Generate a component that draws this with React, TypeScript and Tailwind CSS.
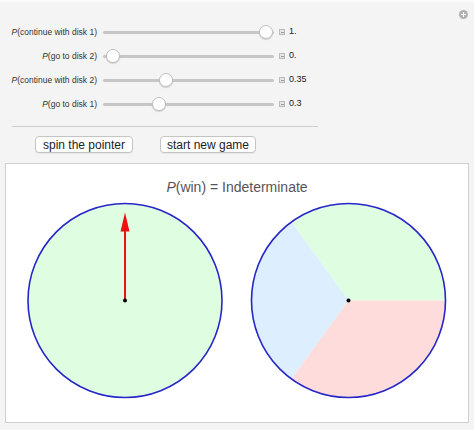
import React from 'react';

const sliders = [
  { label: 'continue with disk 1', value: 1, text: '1.' },
  { label: 'go to disk 2', value: 0, text: '0.' },
  { label: 'continue with disk 2', value: 0.35, text: '0.35' },
  { label: 'go to disk 1', value: 0.3, text: '0.3' },
];

function SliderRow({ label, value, text }: { label: string; value: number; text: string }) {
  return (
    <div className="flex items-center h-6">
      <span className="w-[97px] text-right text-[8.5px] text-[#333] whitespace-nowrap">
        <i>P</i>({label})
      </span>
      <div className="relative ml-[6px] w-[171px] h-[3px] rounded-full bg-[#c6c6c6]">
        <div
          className="absolute top-1/2 -translate-x-1/2 -translate-y-1/2 w-[14px] h-[14px] rounded-full bg-white border border-[#c0c0c0] shadow-[0_1px_1px_rgba(0,0,0,0.15)]"
          style={{ left: 9.5 + value * 153.6 }}
        />
      </div>
      <div className="ml-[5px] w-[6px] h-[6px] border border-[#bbb] bg-[#e6e6e6] flex items-center justify-center">
        <div className="w-[3px] h-px bg-[#999]" />
      </div>
      <span className="ml-[4px] text-[9px] text-[#222]">{text}</span>
    </div>
  );
}

export default function App() {
  const cx1 = 119;
  const cx2 = 342.5;
  const cy = 105.5;
  const r = 97;
  // sectors: continue with disk 2 (0.35), go to disk 1 (0.3), rest lose
  const a1 = 0.35 * 2 * Math.PI;
  const a2 = 0.65 * 2 * Math.PI;
  const p = (a: number) => `${cx2 + r * Math.cos(a)} ${cy - r * Math.sin(a)}`;

  return (
    <div
      className="relative w-[474px] h-[430px] bg-[#f4f4f4] border-t-2 border-[#fbfbfb] flex flex-col"
      style={{ fontFamily: '"Liberation Sans", Arial, sans-serif' }}
    >
      {/* plus icon */}
      <div className="absolute right-[6px] top-[8px] w-[9px] h-[9px] rounded-full bg-[#b0b0b0] flex items-center justify-center">
        <div className="relative w-[5px] h-[5px]">
          <div className="absolute top-[2px] left-0 w-[5px] h-px bg-white" />
          <div className="absolute left-[2px] top-0 h-[5px] w-px bg-white" />
        </div>
      </div>

      <div className="pt-[18px]">
        {sliders.map((s) => (
          <SliderRow key={s.label} {...s} />
        ))}
      </div>

      <div className="mt-[10px] ml-[12px] w-[306px] h-px bg-[#cfcfcf]" />

      <div className="mt-[9px] ml-[35px] flex gap-[27px]">
        <button className="w-[98px] h-[17px] bg-white border border-[#c4c4c4] rounded-[4px] text-[12px] leading-none text-[#222] shadow-[0_1px_0_rgba(0,0,0,0.05)]">
          spin the pointer
        </button>
        <button className="w-[96px] h-[17px] bg-white border border-[#c4c4c4] rounded-[4px] text-[12px] leading-none text-[#222] shadow-[0_1px_0_rgba(0,0,0,0.05)]">
          start new game
        </button>
      </div>

      <div className="mt-[10px] mx-[5px] h-[260px] bg-white border border-[#d0d0d0] flex flex-col">
        <div className="pt-[15px] h-[31px] text-center text-[14px] leading-[16px] text-[#555]">
          <i>P</i>(win) = Indeterminate
        </div>
        <svg width="462" height="227" viewBox="0 0 462 227">
          {/* left disk */}
          <circle cx={cx1} cy={cy} r={r} fill="#dffde0" stroke="#2626c8" strokeWidth="1.6" />
          <line x1={cx1} y1={cy} x2={cx1} y2={cy - 70} stroke="#f01010" strokeWidth="2" />
          <polygon points={`${cx1},${cy - 88} ${cx1 - 4.5},${cy - 69} ${cx1 + 4.5},${cy - 69}`} fill="#f01010" />
          <circle cx={cx1} cy={cy} r="2" fill="#000" />

          {/* right disk */}
          <path d={`M ${cx2} ${cy} L ${p(0)} A ${r} ${r} 0 0 0 ${p(a1)} Z`} fill="#dffde0" />
          <path d={`M ${cx2} ${cy} L ${p(a1)} A ${r} ${r} 0 0 0 ${p(a2)} Z`} fill="#ddeeff" />
          <path d={`M ${cx2} ${cy} L ${p(a2)} A ${r} ${r} 0 0 0 ${p(0)} Z`} fill="#ffdcdc" />
          <circle cx={cx2} cy={cy} r={r} fill="none" stroke="#2626c8" strokeWidth="1.6" />
          <circle cx={cx2} cy={cy} r="2" fill="#000" />
        </svg>
      </div>
    </div>
  );
}
